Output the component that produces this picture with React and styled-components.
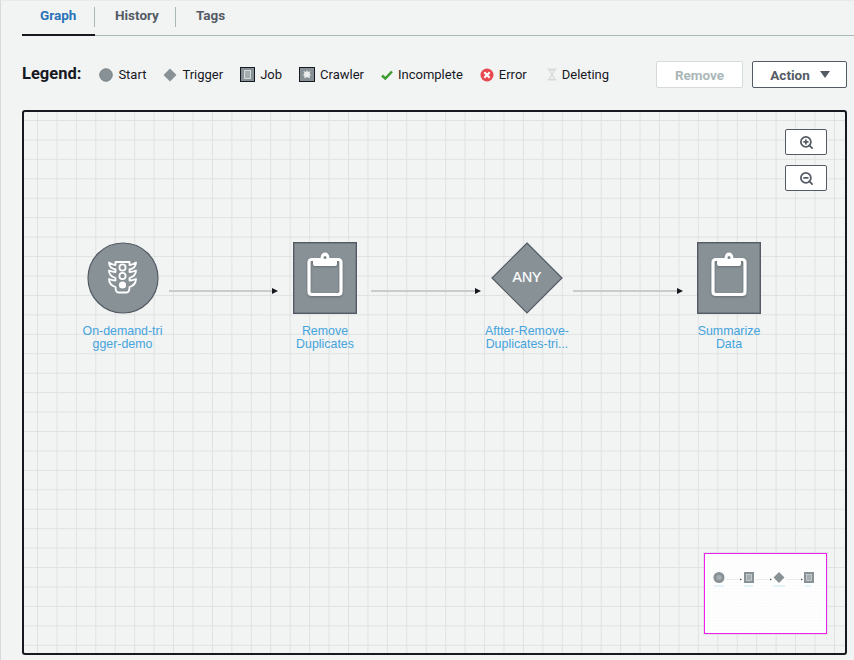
import styled, { createGlobalStyle } from "styled-components";
import { ZoomIn, ZoomOut } from "lucide-react";

const GlobalStyle = createGlobalStyle`
  html, body {
    margin: 0;
    padding: 0;
    background: #f2f3f3;
  }
  body {
    font-family: Roboto, "Noto Sans", sans-serif;
    color: #16191f;
  }
`;

const tabs = ["Graph", "History", "Tags"];

const nodes = [
  { id: "start", x: 122.5, kind: "start", lines: ["On-demand-tri", "gger-demo"] },
  { id: "remove", x: 325, kind: "job", lines: ["Remove", "Duplicates"] },
  { id: "after", x: 527, kind: "trigger", lines: ["Aftter-Remove-", "Duplicates-tri..."] },
  { id: "summarize", x: 729, kind: "job", lines: ["Summarize", "Data"] },
];

const arrows = [
  { id: "a", x: 169, w: 109 },
  { id: "b", x: 371, w: 110 },
  { id: "c", x: 573, w: 110 },
];

const ClipboardGlyph = () => (
  <g fill="none" stroke="#fff" strokeWidth="3.2" strokeLinejoin="round">
    <path d="M20 17.5 H19 Q16 17.5 16 20.5 V49.5 Q16 52.5 19 52.5 H45 Q48 52.5 48 49.5 V20.5 Q48 17.5 45 17.5 H44" />
    <path
      d="M20 16 H27.5 Q28 10.5 32 10.5 Q36 10.5 36.5 16 H44 V22 Q44 24 42 24 H22 Q20 24 20 22 Z"
      fill="#fff"
      stroke="none"
    />
    <circle cx="32" cy="15.5" r="1.5" fill="#7f8789" stroke="none" />
  </g>
);

const TrafficGlyph = () => (
  <g fill="none" stroke="#fff" strokeWidth="1.8" strokeLinejoin="round">
    <path d="M28.5 20 H42.5 V23 Q45.5 23 49 20.5 Q49 26 42.5 27.5 V30 Q45.5 30 49 28.5 Q49 34 42.5 36 V38.5 Q45.5 38.5 49 37 Q49 43 42.5 45 Q42.5 50.5 39.5 50.5 H31.5 Q28.5 50.5 28.5 45 Q22 43 22 37 Q25.5 38.5 28.5 38.5 V36 Q22 34 22 28.5 Q25.5 30 28.5 30 V27.5 Q22 26 22 20.5 Q25.5 23 28.5 23 Z" />
    <circle cx="35.5" cy="25.5" r="3.1" />
    <circle cx="35.5" cy="34" r="3.1" />
    <circle cx="35.5" cy="43" r="3.6" fill="#fff" stroke="none" />
  </g>
);

const NodeShape = ({ kind }) => {
  if (kind === "start") {
    return (
      <svg width="72" height="72" viewBox="0 0 72 72">
        <circle cx="36" cy="36" r="35" fill="#879196" stroke="#545b64" strokeWidth="1.2" />
        <TrafficGlyph />
      </svg>
    );
  }
  if (kind === "trigger") {
    return (
      <svg width="72" height="72" viewBox="0 0 72 72">
        <path d="M36 1 L71 36 L36 71 L1 36 Z" fill="#879196" stroke="#545b64" strokeWidth="1.2" />
      </svg>
    );
  }
  return (
    <svg width="64" height="72" viewBox="0 0 64 72">
      <rect x="0.7" y="0.7" width="62.6" height="70.6" fill="#879196" stroke="#545b64" strokeWidth="1.4" />
      <g style={{ filter: "drop-shadow(0 1px 1px rgba(0,0,0,0.25))" }}>
        <ClipboardGlyph />
      </g>
    </svg>
  );
};

const LegendIcon = ({ kind }) => {
  switch (kind) {
    case "start":
      return (
        <svg width="14" height="14" viewBox="0 0 14 14">
          <circle cx="7" cy="7" r="6.3" fill="#879196" stroke="#6f777b" strokeWidth="0.8" />
        </svg>
      );
    case "trigger":
      return (
        <svg width="14" height="14" viewBox="0 0 14 14">
          <path d="M7 0.5 L13.5 7 L7 13.5 L0.5 7 Z" fill="#879196" />
        </svg>
      );
    case "job":
      return (
        <svg width="15" height="15" viewBox="0 0 15 15">
          <rect x="0.5" y="0.5" width="14" height="14" fill="#879196" stroke="#16191f" />
          <rect x="4.5" y="3.5" width="6" height="8" fill="#a6adb0" stroke="#d5dbdb" />
        </svg>
      );
    case "crawler":
      return (
        <svg width="16" height="15" viewBox="0 0 16 15">
          <rect x="0.5" y="0.5" width="15" height="14" fill="#879196" stroke="#16191f" />
          <path d="M8 3 L9 5 L11.5 4 L10.5 6.5 L12 8 L10.5 9 L11 11 L8 10.2 L5 11 L5.5 9 L4 8 L5.5 6.5 L4.5 4 L7 5 Z" fill="#eaeded" />
        </svg>
      );
    case "incomplete":
      return (
        <svg width="12" height="10" viewBox="0 0 12 10">
          <path d="M1 5.5 L4.3 8.5 L11 1.5" fill="none" stroke="#3e9b2f" strokeWidth="2.5" />
        </svg>
      );
    case "error":
      return (
        <svg width="14" height="14" viewBox="0 0 14 14">
          <circle cx="7" cy="7" r="6.5" fill="#e9474f" />
          <path d="M4.3 4.3 L9.7 9.7 M9.7 4.3 L4.3 9.7" stroke="#fff" strokeWidth="2.2" />
        </svg>
      );
    default:
      return (
        <svg width="10" height="13" viewBox="0 0 10 13">
          <path d="M0.5 0.5 H9.5 V2 H8.5 L5.8 6.5 L8.5 11 H9.5 V12.5 H0.5 V11 H1.5 L4.2 6.5 L1.5 2 H0.5 Z" fill="#d5dbdb" />
          <path d="M3 2.5 H7 L5 5.5 Z M2.5 11 L5 8 L7.5 11 Z" fill="#eceeee" />
        </svg>
      );
  }
};

const legendItems = [
  { kind: "start", label: "Start" },
  { kind: "trigger", label: "Trigger" },
  { kind: "job", label: "Job" },
  { kind: "crawler", label: "Crawler" },
  { kind: "incomplete", label: "Incomplete" },
  { kind: "error", label: "Error" },
  { kind: "deleting", label: "Deleting", shift: 3 },
];

const MiniMapDrawing = () => (
  <svg width="121" height="79" viewBox="0 0 121 79">
    <defs>
      <pattern id="miniGrid" width="2.92" height="2.92" patternUnits="userSpaceOnUse">
        <path d="M2.92 0 V2.92 H0" fill="none" stroke="#f1f3f3" strokeWidth="0.5" />
      </pattern>
    </defs>
    <rect width="121" height="79" fill="url(#miniGrid)" />
    <g stroke="#eceeee" strokeWidth="1">
      <path d="M20 25.5 H36 M50 25.5 H66 M80 25.5 H97" />
    </g>
    <g fill="#54585b">
      <path d="M35 24.5 L37 25.5 L35 26.5 Z M65 24.5 L67 25.5 L65 26.5 Z M96 24.5 L98 25.5 L96 26.5 Z" />
    </g>
    <circle cx="14" cy="23.5" r="5.5" fill="#879196" />
    <circle cx="14" cy="23.5" r="2.6" fill="#a6adb0" />
    <rect x="39" y="18" width="10" height="11" fill="#879196" />
    <rect x="41.5" y="20.5" width="5" height="6" fill="#a6adb0" stroke="#d5dbdb" strokeWidth="0.7" />
    <path d="M74 18 L79.5 23.5 L74 29 L68.5 23.5 Z" fill="#879196" />
    <rect x="99" y="18" width="10" height="11" fill="#879196" />
    <rect x="101.5" y="20.5" width="5" height="6" fill="#a6adb0" stroke="#d5dbdb" strokeWidth="0.7" />
    <g fill="#e3f1f9">
      <rect x="9" y="31" width="10" height="2" />
      <rect x="39" y="31" width="9" height="2" />
      <rect x="68" y="31" width="12" height="2" />
      <rect x="100" y="31" width="6" height="2" />
    </g>
  </svg>
);

const App = () => {
  return (
    <Page>
      <GlobalStyle />
      <TabBar>
        {tabs.map((tab, i) => (
          <Tab key={tab} $active={i === 0} $last={i === tabs.length - 1}>
            <TabLabel $active={i === 0}>{tab}</TabLabel>
          </Tab>
        ))}
      </TabBar>

      <Toolbar>
        <Legend>
          <LegendTitle>Legend:</LegendTitle>
          {legendItems.map((item) => (
            <LegendItem key={item.kind} $shift={item.shift || 0}>
              <LegendIcon kind={item.kind} />
              <span>{item.label}</span>
            </LegendItem>
          ))}
        </Legend>
        <Actions>
          <RemoveButton disabled>Remove</RemoveButton>
          <ActionButton>
            Action
            <Caret />
          </ActionButton>
        </Actions>
      </Toolbar>

      <Canvas>
        <ZoomControls>
          <ZoomButton>
            <ZoomIn size={15} strokeWidth={2.8} />
          </ZoomButton>
          <ZoomButton>
            <ZoomOut size={15} strokeWidth={2.8} />
          </ZoomButton>
        </ZoomControls>

        {arrows.map((arrow) => (
          <Arrow key={arrow.id} $x={arrow.x} $w={arrow.w} />
        ))}

        {nodes.map((node) => (
          <Node key={node.id} $x={node.x}>
            <ShapeBox>
              <NodeShape kind={node.kind} />
              {node.kind === "trigger" && <AnyText>ANY</AnyText>}
            </ShapeBox>
            <NodeLabel>
              {node.lines.map((line) => (
                <div key={line}>{line}</div>
              ))}
            </NodeLabel>
          </Node>
        ))}

        <MiniMap>
          <MiniMapDrawing />
        </MiniMap>
      </Canvas>
    </Page>
  );
};

export default App;

// STYLED COMPONENTS ////////////////////////////////////////////////////////////////////////////////////////////////////

const Page = styled.div`
  width: 854px;
  height: 660px;
  box-sizing: border-box;
  overflow: hidden;
  display: flex;
  flex-direction: column;
  padding-left: 22px;
  background: #f2f3f3;
  border-top: 1px solid #e9ebeb;
  border-left: 1px solid #d5dbdb;
`;

const TabBar = styled.div`
  display: flex;
  height: 35px;
  box-sizing: border-box;
  align-items: stretch;
  border-bottom: 1px solid #aab7b8;
  margin-left: -1px;
`;

const Tab = styled.div`
  position: relative;
  width: ${(p) => (p.$active ? "73px" : p.$last ? "auto" : "81px")};
  padding-left: ${(p) => (p.$active ? "18px" : "20px")};
  box-sizing: border-box;
  border-bottom: ${(p) => (p.$active ? "2px solid #16191f" : "none")};
  margin-bottom: -1px;
  &::after {
    content: "";
    display: ${(p) => (p.$last ? "none" : "block")};
    position: absolute;
    right: 0;
    top: 6px;
    height: 20px;
    width: 1px;
    background: #aab7b8;
  }
`;

const TabLabel = styled.span`
  display: block;
  font-size: 13.5px;
  line-height: 18px;
  margin-top: 5px;
  font-weight: 700;
  color: ${(p) => (p.$active ? "#2a74b8" : "#545b64")};
`;

const Toolbar = styled.div`
  display: flex;
  justify-content: space-between;
  align-items: center;
  height: 27px;
  margin-top: 25px;
  margin-left: -1px;
  padding-right: 7px;
`;

const Legend = styled.div`
  display: flex;
  align-items: center;
  gap: 17px;
`;

const LegendTitle = styled.div`
  font-size: 16.5px;
  font-weight: 700;
  margin-top: -3px;
  margin-right: 1px;
`;

const LegendItem = styled.div`
  display: flex;
  align-items: center;
  gap: 5px;
  margin-left: ${(p) => p.$shift}px;
  font-size: 13px;
  line-height: 18px;
`;

const Actions = styled.div`
  display: flex;
  gap: 9px;
`;

const RemoveButton = styled.button`
  width: 87px;
  height: 27px;
  padding: 0;
  background: #fff;
  border: 1px solid #d5dbdb;
  border-radius: 2px;
  font-family: inherit;
  font-size: 13.5px;
  font-weight: 700;
  color: #aab7b8;
`;

const ActionButton = styled.button`
  width: 95px;
  height: 27px;
  display: flex;
  align-items: center;
  justify-content: center;
  gap: 10px;
  padding: 0 0 0 1px;
  background: #fff;
  border: 1px solid #545b64;
  border-radius: 2px;
  font-family: inherit;
  font-size: 13.5px;
  font-weight: 700;
  color: #545b64;
`;

const Caret = styled.span`
  width: 0;
  height: 0;
  border-left: 5px solid transparent;
  border-right: 5px solid transparent;
  border-top: 7px solid #545b64;
`;

const Canvas = styled.div`
  position: relative;
  width: 825px;
  height: 545px;
  box-sizing: border-box;
  margin-top: 22px;
  margin-left: -1px;
  border: 2px solid #16191f;
  border-radius: 3px;
  background-color: #f2f3f3;
  background-image:
    linear-gradient(to right, #e0e2e2 1.4px, transparent 1.4px),
    linear-gradient(to bottom, #e0e2e2 1.4px, transparent 1.4px);
  background-size: 19.45px 19.45px;
  background-position: 13px 8px;
`;

const ZoomControls = styled.div`
  position: absolute;
  top: 17px;
  right: 18px;
  display: flex;
  flex-direction: column;
  gap: 10px;
`;

const ZoomButton = styled.button`
  width: 42px;
  height: 26px;
  display: flex;
  align-items: center;
  justify-content: center;
  padding: 0;
  background: #fff;
  border: 1px solid #545b64;
  border-radius: 2px;
  color: #545b64;
`;

const Arrow = styled.div`
  position: absolute;
  left: ${(p) => p.$x - 24}px;
  top: 178px;
  width: ${(p) => p.$w}px;
  height: 2px;
  background: linear-gradient(to right, #c8cccc 95%, transparent 95%);
  &::after {
    content: "";
    position: absolute;
    right: 0;
    top: -2.5px;
    border-left: 6px solid #16191f;
    border-top: 3.5px solid transparent;
    border-bottom: 3.5px solid transparent;
  }
`;

const Node = styled.div`
  position: absolute;
  left: ${(p) => p.$x - 24 - 60}px;
  top: 130px;
  width: 120px;
  display: flex;
  flex-direction: column;
  align-items: center;
`;

const ShapeBox = styled.div`
  position: relative;
  height: 72px;
  display: flex;
  justify-content: center;
  svg {
    display: block;
  }
`;

const AnyText = styled.span`
  position: absolute;
  inset: 0 0 3px;
  display: flex;
  align-items: center;
  justify-content: center;
  font-family: "Liberation Sans", Arial, sans-serif;
  font-size: 14px;
  color: #fff;
  -webkit-text-stroke: 0.2px #fff;
`;

const NodeLabel = styled.div`
  margin-top: 11px;
  text-align: center;
  font-family: "Liberation Sans", Arial, sans-serif;
  font-size: 12.4px;
  line-height: 13px;
  color: #44a4dd;
  white-space: nowrap;
`;

const MiniMap = styled.div`
  position: absolute;
  right: 18px;
  bottom: 19px;
  width: 123px;
  height: 81px;
  box-sizing: border-box;
  background: #fff;
  border: 1px solid #f01ff0;
  box-shadow: 0 0 0 1px rgba(213, 219, 219, 0.6);
  svg {
    display: block;
    filter: blur(0.4px);
  }
`;
